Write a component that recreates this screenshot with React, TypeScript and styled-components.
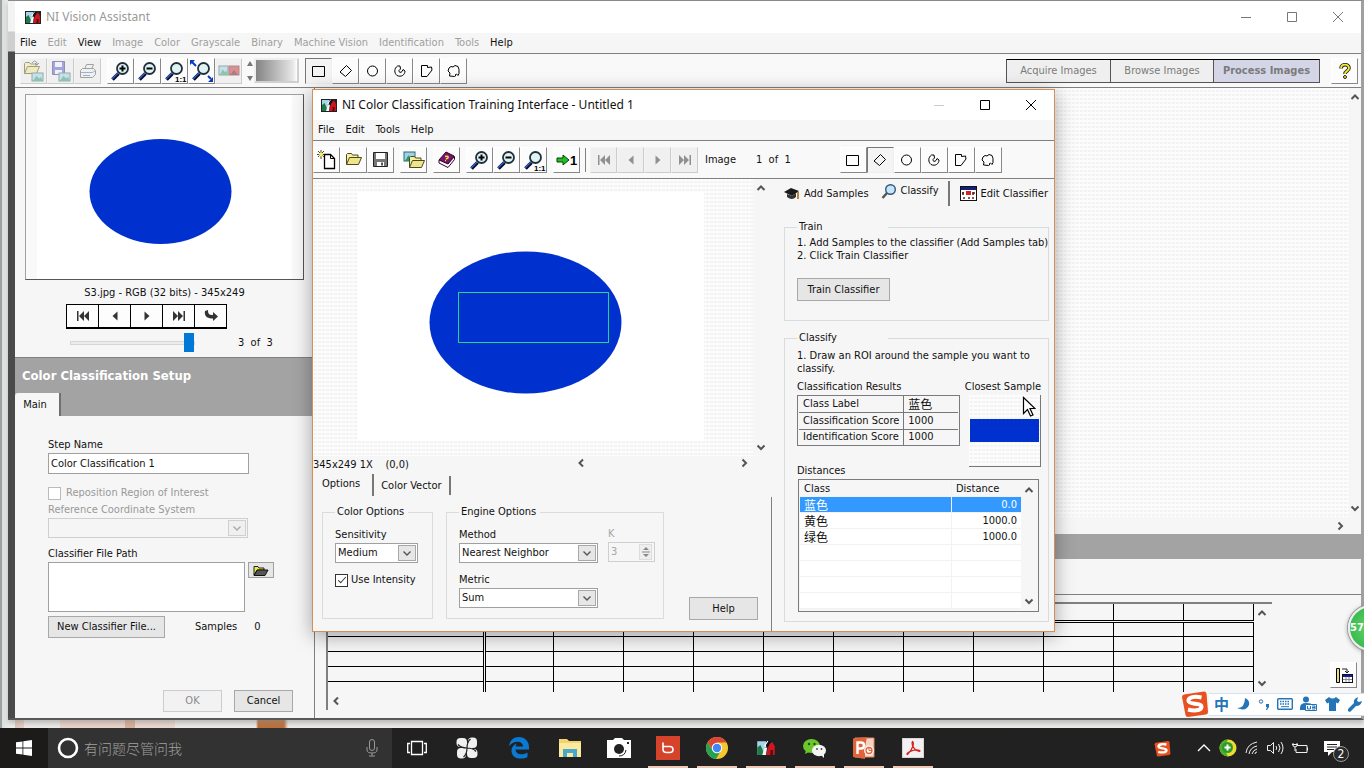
import React from 'react';
import styled, { createGlobalStyle, css } from 'styled-components';

const UI_FONT = `"DejaVu Sans Condensed", "Noto Sans", "Noto Sans CJK SC", sans-serif`;
const TITLE_FONT = `"Noto Sans", "Noto Sans CJK SC", sans-serif`;
const CJK_FONT = `"Noto Sans CJK SC", sans-serif`;

const FACE = '#f6f6f6';
const EDGE = '#808080';
const BAND = '#a3a3a3';
const BLUE = '#0031ce';
const dots = css`
  background-color: #f3f3f3;
  background-image: linear-gradient(90deg, #fcfcfc 1px, transparent 1px),
    linear-gradient(#fcfcfc 2px, transparent 2px);
  background-size: 4px 4px;
`;

const GlobalStyle = createGlobalStyle`
  *, *::before, *::after { box-sizing: border-box; }
  body { margin: 0; font: 11px/16px ${UI_FONT}; color: #111; overflow: hidden; }
  button, input, select, textarea { font: inherit; color: inherit; margin: 0; border-radius: 0; }
  button { padding: 0; border: 0; background: none; }
  svg { display: block; flex: none; }
`;

/* ---------- icons ---------- */

const AppLogo = ({ w = 16 }: { w?: number }) => (
  <svg width={w} height={w * 13 / 16} viewBox="0 0 16 13">
    <rect width="16" height="13" fill="#1c2326" />
    <rect x="1" y="1" width="7" height="11" fill="#a9d4ea" />
    <path d="M1 12V6l2.500-2 1.500 3 2 5z" fill="#1e7a46" />
    <path d="M5 12l1.500-5L9 5l-1 7z" fill="#f4f8f8" />
    <path d="M8 12l1-4 2-5 2-1.500L15 5v7z" fill="#d0161c" />
    <path d="M9 1h3l-3 5-1.500 0z" fill="#111" />
    <path d="M11.500 8h2v4h-2z" fill="#5a0a0e" />
    <path d="M9.500.8 7 4.500 8 5.500" stroke="#fff" strokeWidth=".9" fill="none" />
  </svg>
);

const Lens = ({ kind }: { kind: 'in' | 'out' | 'one' | 'fit' }) => (
  <svg width="26" height="24" viewBox="0 0 26 24">
    <path d="M4.500 20.500 10.500 14.500" stroke="#0a0a28" strokeWidth="3.600" />
    <path d="M4 20 10 14" stroke="#2c62c8" strokeWidth="1.400" />
    <circle cx="14.500" cy="9.500" r="5.500" fill="#dff3f4" stroke="#20303c" strokeWidth="1.800" />
    {(kind === 'in' || kind === 'out') && <path d="M11.500 9.500h6" stroke="#000" strokeWidth="2" />}
    {kind === 'in' && <path d="M14.500 6.500v6" stroke="#000" strokeWidth="2" />}
    {kind === 'one' && (
      <text x="13" y="23" fontSize="8" fontWeight="bold" fontFamily="Liberation Sans, sans-serif">1:1</text>
    )}
    {kind === 'fit' && (
      <g stroke="#0a36c8" fill="#0a36c8">
        <path d="M3 3l4 4M19 17l3 3" strokeWidth="2" />
        <path d="M1 1h5L1 6zM24 23h-5l5-5z" stroke="none" />
      </g>
    )}
  </svg>
);

const Mountain = ({ x, y, w, h }: { x: number; y: number; w: number; h: number }) => (
  <g transform={`translate(${x} ${y})`}>
    <rect width={w} height={h} fill="#9fd0f0" stroke="#2e6c58" />
    <path d={`M1 ${h} L${w * 0.4} ${h * 0.35} L${w * 0.65} ${h * 0.7} L${w * 0.8} ${h * 0.5} L${w} ${h}z`} fill="#2c9a6c" />
  </g>
);

const FolderShape = ({ x = 0, y = 0 }) => (
  <g transform={`translate(${x} ${y})`} stroke="#4a4a20" strokeWidth="1">
    <path d="M1.500 12.500v-10l1-1h4l1 1.500h5.500v3" fill="#f6f0a0" />
    <path d="M1.500 12.500 4.500 5.500h12l-3 7z" fill="#efe48a" />
  </g>
);

const OpenImageIcon = () => (
  <svg width="22" height="22" viewBox="0 0 22 22">
    <FolderShape x={0} y={1} />
    <path d="M9 3c2-3 5-2 5 1m-2-1 2 2 2-2" fill="none" stroke="#444" />
    <Mountain x={9} y={13} w={11} h={8} />
  </svg>
);
const SaveImageIcon = () => (
  <svg width="22" height="22" viewBox="0 0 22 22">
    <path d="M2.500 1.500h12v13h-12z" fill="#5a5ad0" stroke="#303080" />
    <path d="M5 2h7v5H5zM5 10h7v4H5z" fill="#f2f2ff" />
    <Mountain x={9} y={13} w={11} h={8} />
  </svg>
);
const PrintIcon = () => (
  <svg width="22" height="22" viewBox="0 0 22 22" stroke="#555" fill="#eef0f4">
    <path d="M7.500 9.500l2-5h7l-2 5z" />
    <path d="M3.500 10.500l2-2h11l2 2v4l-3 3h-12z" />
    <path d="M3.500 12.500h12l3-2M6 15.500h7" fill="none" stroke="#4a76a8" />
  </svg>
);
const TwoImagesIcon = () => (
  <svg width="22" height="12" viewBox="0 0 22 12">
    <Mountain x={1} y={1} w={9} h={9} />
    <rect x="11" y="1" width="10" height="9" fill="#c43038" stroke="#7a2020" />
    <path d="M12 10l4-5 4 5z" fill="#5c1014" />
  </svg>
);

const ShapeIcon = ({ name }: { name: string }) => (
  <svg width="14" height="14" viewBox="0 0 14 14" fill="none" stroke="#000" strokeWidth="1">
    {name === 'rect' && <path d="M.5 2.500h12v10H.5z" />}
    {name === 'rot' && <path d="M1 8 7.500 1.500l5 5L6.500 12.500z" />}
    {name === 'oval' && <circle cx="6.500" cy="7" r="5" />}
    {name === 'ring' && <path d="M4.500 2C1 4.500 1 9 4 11.500c4 2 8-.5 8-4.500L10 5.500 9 7.500C8 9 5.500 8.500 6 6.500L7.500 5 7 2z" />}
    {name === 'poly' && <path d="M1.500 1.500h6v2l4-.5.5 3-5 6.500H1.500z" />}
    {name === 'free' && <path d="M4 2.500l2 .5 2-1.500 3 1L12 5.500v4l-1 2L9.500 10l-1 .5v1.500l-1 .5-5-.5.5-3-2-2 1-3z" />}
  </svg>
);

const SHAPES = ['rect', 'rot', 'oval', 'ring', 'poly', 'free'];
const SHAPE_LABELS = ['Rectangle', 'Rotated rectangle', 'Oval', 'Annulus', 'Polygon', 'Freehand region'];

const NavGlyph = ({ name, color = '#333' }: { name: string; color?: string }) => (
  <svg width="16" height="12" viewBox="0 0 16 12" fill={color}>
    {name === 'first' && <path d="M2 1h1.500v10H2zM9 1v10L4 6zM14 1v10L9 6z" />}
    {name === 'prev' && <path d="M10.500 1.500v9L5.500 6z" />}
    {name === 'next' && <path d="M5.500 1.500v9L10.500 6z" />}
    {name === 'last' && <path d="M12.500 1H14v10h-1.500zM2 1v10l5-5zM7 1v10l5-5z" />}
    {name === 'return' && <path d="M2 1l3-1c0 4 1 5 5 5V2l5 4.500L10 11V8.500C4 8.500 1 6 2 1z" />}
  </svg>
);

const Chevron = ({ dir = 'down', size = 10, color = '#555', weight = 2 }: { dir?: 'up' | 'down' | 'left' | 'right'; size?: number; color?: string; weight?: number }) => (
  <svg width={size} height={size} viewBox="0 0 10 10" fill="none" stroke={color} strokeWidth={weight}>
    {dir === 'up' && <path d="M1.500 7 5 3.500 8.500 7" />}
    {dir === 'down' && <path d="M1.500 3.500 5 7l3.500-3.500" />}
    {dir === 'left' && <path d="M7 1.500 3.500 5 7 8.500" />}
    {dir === 'right' && <path d="M3.500 1.500 7 5 3.500 8.500" />}
  </svg>
);

/* ---------- shared controls ---------- */

const TitleBar = styled.header<{ $tall?: boolean }>`
  display: flex;
  align-items: center;
  height: ${p => (p.$tall ? 32 : 30)}px;
  padding-left: ${p => (p.$tall ? 10 : 8)}px;
  gap: 5px;
  background: #fff;
  font: 12px/16px ${TITLE_FONT};
  color: ${p => (p.$tall ? '#999' : '#111')};
  flex: none;
`;
const WindowTitle = styled.span`flex: 1; white-space: nowrap;`;
const CaptionGroup = styled.div`display: flex; height: 100%;`;
const Caption = styled.button`
  width: 46px;
  height: 100%;
  display: grid;
  place-items: center;
`;
const CaptionButtons = ({ color, minColor = color }: { color: string; minColor?: string }) => (
  <CaptionGroup>
    <Caption aria-label="Minimize"><svg width="10" height="10"><path d="M0 5.500h10" stroke={minColor} /></svg></Caption>
    <Caption aria-label="Maximize"><svg width="10" height="10"><path d="M.5.5h9v9h-9z" stroke={color} fill="none" /></svg></Caption>
    <Caption aria-label="Close"><svg width="10" height="10"><path d="M0 0l10 10M10 0 0 10" stroke={color} /></svg></Caption>
  </CaptionGroup>
);

const MenuBar = styled.nav`
  display: flex;
  height: 21px;
  align-items: center;
  gap: 11px;
  padding-left: 5px;
  background: ${FACE};
  border-bottom: 1px solid ${EDGE};
  flex: none;
`;
const MenuItem = styled.button`
  white-space: nowrap;
  &:disabled { color: #a0a0a0; }
`;

const Toolbar = styled.div<{ $dialog?: boolean }>`
  display: flex;
  align-items: center;
  height: ${p => (p.$dialog ? 38 : 34)}px;
  padding: 0 3px 0 ${p => (p.$dialog ? 0 : 5)}px;
  gap: 6px;
  background: #f9f9f9;
  border-bottom: 1px solid ${EDGE};
  flex: none;
`;
const ToolGroup = styled.div<{ $push?: number }>`
  display: flex;
  margin-left: ${p => p.$push ?? 0}px;
`;
const Tool = styled.button<{ $down?: boolean }>`
  width: 27px;
  height: 26px;
  display: grid;
  place-items: center;
  background: ${p => (p.$down ? '#f4f4f4' : '#fcfcfc')};
  border: 1px solid;
  border-color: ${p => (p.$down ? '#777 #eee #eee #777' : '#fff #888 #888 #fff')};
  &:disabled { background: #f0f0f0; border-color: #f4f4f4 #ccc #ccc #f4f4f4; }
  &:disabled svg { opacity: .5; }
`;
const Spacer = styled.div`flex: 1;`;

const ShapeTools = ({ active, push }: { active: string; push?: number }) => (
  <ToolGroup $push={push}>
    {SHAPES.map((s, i) => (
      <Tool key={s} $down={s === active} aria-label={SHAPE_LABELS[i]}><ShapeIcon name={s} /></Tool>
    ))}
  </ToolGroup>
);

const PushButton = styled.button<{ $w: number; $h?: number }>`
  width: ${p => p.$w}px;
  height: ${p => p.$h ?? 22}px;
  background: #e6e6e6;
  border: 1px solid #a8a8a8;
  white-space: nowrap;
  &:disabled { color: #8a8a8a; background: #f2f2f2; border-color: #ccc; }
`;

const Field = styled.input`
  height: 21px;
  width: 100%;
  padding: 0 2px;
  background: #fff;
  border: 1px solid #a0a0a0;
  outline: 0;
`;

const SelectBox = styled.div<{ $off?: boolean }>`
  display: grid;
  grid-template-columns: 1fr 18px;
  align-items: center;
  height: 20px;
  padding-right: 1px;
  border: 1px solid ${p => (p.$off ? '#cfcfcf' : '#a0a0a0')};
  background: ${p => (p.$off ? '#f5f5f5' : '#fff')};
  select {
    grid-area: 1 / 1 / 2 / 3;
    appearance: none;
    width: 100%;
    height: 18px;
    border: 0;
    padding: 0 20px 0 2px;
    background: none;
    outline: 0;
    opacity: 1;
  }
`;
const SelectArrow = styled.span<{ $off?: boolean }>`
  grid-area: 1 / 2 / 2 / 3;
  height: 16px;
  display: grid;
  place-items: center;
  border: 1px solid ${p => (p.$off ? '#d0d0d0' : '#a8a8a8')};
  background: ${p => (p.$off ? '#f0f0f0' : '#e6e6e6')};
  pointer-events: none;
`;
const Dropdown = ({ id, value, off }: { id: string; value: string; off?: boolean }) => (
  <SelectBox $off={off}>
    <select id={id} disabled={off} defaultValue={value}><option>{value}</option></select>
    <SelectArrow $off={off}><Chevron size={10} weight={1.4} color={off ? '#aaa' : '#555'} /></SelectArrow>
  </SelectBox>
);

const CheckLabel = styled.label<{ $off?: boolean }>`
  display: flex;
  align-items: center;
  gap: ${p => (p.$off ? 5 : 3)}px;
  height: 16px;
  white-space: nowrap;
  color: ${p => (p.$off ? '#999' : '#111')};
  input {
    appearance: none;
    width: 13px;
    height: 13px;
    border: 1px solid ${p => (p.$off ? '#bbb' : '#333')};
    background: #fff;
    display: grid;
    place-items: center;
  }
  input:checked::after {
    content: '';
    width: 4px;
    height: 8px;
    margin-bottom: 2px;
    border: solid #333;
    border-width: 0 1px 1px 0;
    rotate: 42deg;
  }
`;

const Group = styled.fieldset<{ $w?: number; $h: number; $legendW?: number }>`
  width: ${p => (p.$w ? p.$w + 'px' : 'auto')};
  height: ${p => p.$h}px;
  min-width: 0;
  margin: 0;
  padding: 0 8px 0 12px;
  border: 1px solid #d9dcdc;
  legend {
    height: 16px;
    padding: 0 4px 0 2px;
    width: ${p => (p.$legendW ? p.$legendW + 'px' : 'auto')};
    white-space: nowrap;
  }
`;

const ScrollColumn = styled.div<{ $w?: number }>`
  display: flex;
  flex-direction: column;
  justify-content: space-between;
  align-items: center;
  width: ${p => p.$w ?? 16}px;
  padding: 4px 0;
  background: ${FACE};
`;

/* ---------- desktop and main window ---------- */

const Desktop = styled.div`
  position: relative;
  height: 100vh;
  display: flex;
  flex-direction: column;
  background: linear-gradient(90deg, #9da39f 2px, #dcdfe0 2px, #eceeee 8px, #efefef 15px, #e4c4b8 15px, #e8cfc6 24px,
    #ecebe8 24px, #ecebe8 60px, #ecd4ca 60px, #ecd4ca 125px, #dcae98 125px, #dcae98 135px, #ecd8d0 135px, #ecd8d0 175px,
    #ecebe8 175px, #ecebe8 256px, #bd7038 258px, #bd7038 284px, #ecebe8 288px, #ececec 100%);
`;
const MainWindow = styled.main`
  flex: 1;
  min-height: 0;
  display: flex;
  flex-direction: column;
  margin: 0 0 8px 8px;
  padding-left: 7px;
  border-top: 1px solid #8a8a8a;
  border-right: 3px solid #a29fa1;
  border-bottom: 2px solid #585858;
  background: linear-gradient(#f3f3f3 30px, #cfcfcf 31px, #cfcfcf 50px, #4a4a4a 51px);
  box-shadow: 0 3px 5px #8888;
`;
const Gradient = styled.div`
  width: 45px;
  height: 25px;
  border: 2px solid #eee;
  border-right-color: #d0d0d0;
  border-bottom-color: #d0d0d0;
  background: linear-gradient(90deg, #848484, #e6e6e6 90%, #fff);
`;
const SpinPair = styled.div`
  display: flex;
  flex-direction: column;
  justify-content: space-between;
  align-items: center;
  height: 24px;
  width: 6px;
  margin: 0 -5px 0 -1px;
`;
const ModeTabs = styled.div`
  display: flex;
  height: 24px;
  border: 1px solid #555;
  border-top-color: #000;
  margin-right: 5px;
`;
const ModeTab = styled.button<{ $on?: boolean }>`
  padding: 0 8px;
  min-width: ${p => (p.$on ? 106 : 103)}px;
  color: #7b7b7b;
  background: ${p => (p.$on ? '#d5d5e8' : '#efefef')};
  font-weight: ${p => (p.$on ? 'bold' : 'normal')};
  & + & { border-left: 1px solid #555; }
`;

const Work = styled.div`
  flex: 1;
  min-height: 0;
  display: flex;
  background: ${FACE};
`;
const SidePanel = styled.aside`
  width: 300px;
  flex: none;
  display: flex;
  flex-direction: column;
  border-right: 1px solid ${EDGE};
`;
const Preview = styled.section`
  display: flex;
  flex-direction: column;
  align-items: center;
  height: 270px;
  padding: 6px 10px 0;
  border-bottom: 1px solid ${EDGE};
`;
const Thumb = styled.div`
  align-self: stretch;
  height: 186px;
  padding: 0 11px;
  border: 1px solid;
  border-color: #a0a0a0 #555 #555 #a0a0a0;
  background: #f9f9f9;
`;
const ThumbCaption = styled.p`margin: 5px 0 3px; line-height: 16px; white-space: pre;`;
const NavButtons = styled.div`
  display: flex;
  width: 161px;
  margin-right: 36px;
  border: 1px solid #000;
  border-bottom-width: 2px;
  button {
    flex: 1;
    height: 22px;
    display: grid;
    place-items: center;
    background: #fdfdfd;
  }
  button + button { border-left: 1px solid #000; }
`;
const SlideRow = styled.div`
  display: flex;
  align-self: stretch;
  align-items: center;
  gap: 43px;
  padding: 4px 0 0 45px;
  white-space: pre;
`;
const Slider = styled.input`
  appearance: none;
  width: 125px;
  height: 20px;
  background: none;
  &::-webkit-slider-runnable-track {
    height: 4px;
    border: 1px solid #d6d6d6;
    background: #ececec;
  }
  &::-webkit-slider-thumb {
    appearance: none;
    width: 10px;
    height: 19px;
    margin-top: -9px;
    background: #0078d7;
  }
`;

const SetupHeader = styled.div`
  height: 58px;
  flex: none;
  display: flex;
  flex-direction: column;
  justify-content: space-between;
  background: ${BAND};
  h2 { margin: 0; padding: 10px 7px 0; font: bold 13px/16px ${UI_FONT}; color: #fff; }
`;
const SetupTab = styled.button`
  width: 46px;
  height: 23px;
  padding-right: 4px;
  background: ${FACE};
  border-right: 2px solid #707070;
  border-top-left-radius: 3px;
`;
const SetupForm = styled.form`
  flex: 1;
  display: flex;
  flex-direction: column;
  padding: 20px 21px 6px 33px;
`;
const FormBlock = styled.div<{ $w: number; $gap?: number; $off?: boolean }>`
  width: ${p => p.$w}px;
  margin-bottom: ${p => p.$gap ?? 8}px;
  color: ${p => (p.$off ? '#999' : '#111')};
  label { display: block; height: 17px; line-height: 17px; white-space: nowrap; }
`;
const PathRow = styled.div`
  display: flex;
  align-items: flex-start;
  gap: 3px;
  margin-bottom: 4px;
`;
const PathBox = styled.textarea`
  width: 197px;
  height: 50px;
  resize: none;
  border: 1px solid #a0a0a0;
  outline: 0;
`;
const FolderButton = styled.button`
  width: 26px;
  height: 16px;
  display: grid;
  place-items: center;
  background: #e6e6e6;
  border: 1px solid #a0a0a0;
`;
const SampleRow = styled.div`
  display: flex;
  align-items: center;
  gap: 30px;
  output { margin-left: -13px; }
`;
const FormActions = styled.div`
  display: flex;
  justify-content: flex-end;
  gap: 12px;
  margin-top: auto;
`;

const Stage = styled.section`
  flex: 1;
  min-width: 0;
  display: flex;
  flex-direction: column;
`;
const CanvasRow = styled.div`flex: 1; display: flex;`;
const Canvas = styled.div`flex: 1; ${dots}`;
const HScroll = styled.div`
  height: 17px;
  display: flex;
  justify-content: flex-end;
  align-items: center;
  padding-right: 16px;
`;
const Band = styled.div`height: 25px; background: ${BAND};`;
const ScriptStrip = styled.div`height: 36px; border-bottom: 1px solid ${EDGE};`;
const ResultArea = styled.div`
  height: 123px;
  display: flex;
  justify-content: space-between;
  padding: 7px 4px 0 11px;
`;
const ResultBox = styled.div`
  width: 946px;
  height: 108px;
  border-top: 2px solid ${EDGE};
  border-left: 2px solid ${EDGE};
`;
const ResultTop = styled.div`display: flex; height: 88px; overflow: hidden;`;
const ResultScroll = styled.div`padding: 4px 3px;`;
const ResultTable = styled.table`
  width: 926px;
  height: 92px;
  flex: none;
  table-layout: fixed;
  border-collapse: collapse;
  td, th { height: 15px; padding: 0; border: 1px solid #000; border-left: 0; }
  th { border-top: 0; height: 17px; border-bottom: 3px double #000; }
  td:first-child, th:first-child { width: 156px; border-right: 3px double #000; }
`;
const ToolsColumn = styled.div`
  display: flex;
  flex-direction: column;
  padding-top: 60px;
`;

/* ---------- training dialog ---------- */

const Dialog = styled.div`
  position: absolute;
  left: 312px;
  top: 89px;
  width: 743px;
  display: flex;
  flex-direction: column;
  border: 1px solid #d58f56;
  background: ${FACE};
  box-shadow: 0 4px 18px rgba(0, 0, 0, .35);
`;
const Divider = styled.i`width: 1px; height: 24px; margin: 0 -2px 0 -1px; background: ${EDGE};`;
const ImageCount = styled.span`
  display: flex;
  gap: 20px;
  margin-left: 1px;
  white-space: pre;
`;
const DialogBody = styled.div`display: flex; height: 452px;`;
const DialogLeft = styled.div`
  width: 459px;
  flex: none;
  display: flex;
  flex-direction: column;
`;
const ImageRow = styled.div`display: flex; height: 277px;`;
const ImageCanvas = styled.div`
  flex: 1;
  padding: 13px 0 0 45px;
  ${dots}
`;
const ImageScroll = styled(ScrollColumn)`margin-right: 3px;`;
const StatusRow = styled.div`
  display: flex;
  align-items: center;
  height: 17px;
  white-space: pre;
`;
const StatusScroll = styled.div`
  display: flex;
  justify-content: space-between;
  width: 173px;
  margin: 0 23px 3px auto;
`;
const TabRow = styled.div`
  display: flex;
  align-items: center;
  height: 24px;
`;
const PlainTab = styled.button<{ $h: number; $edge?: boolean; $pad: string }>`
  height: ${p => p.$h}px;
  display: flex;
  align-items: center;
  gap: 4px;
  padding: ${p => p.$pad};
  white-space: nowrap;
  border-right: ${p => (p.$edge ? '2px solid #777' : '0')};
`;
const OptionsRow = styled.div`
  flex: 1;
  display: flex;
  align-items: flex-start;
  padding: 7px 13px 0 9px;
  border-right: 1px solid ${EDGE};
  gap: 13px;
`;
const Column = styled.div<{ $w?: number; $top?: number; $gap?: number }>`
  display: flex;
  flex: none;
  flex-direction: column;
  width: ${p => (p.$w ? p.$w + 'px' : 'auto')};
  padding-top: ${p => p.$top ?? 7}px;
  gap: ${p => p.$gap ?? 8}px;
`;
const Stack = styled.div<{ $off?: boolean }>`
  color: ${p => (p.$off ? '#a6a6a6' : '#111')};
  label { display: block; height: 16px; }
`;
const EngineGrid = styled.div`display: flex; gap: 10px;`;
const Spinner = styled.div`
  display: flex;
  align-items: center;
  justify-content: space-between;
  width: 47px;
  height: 20px;
  padding-right: 2px;
  border: 1px solid #cfcfcf;
  input { width: 26px; border: 0; padding: 0 2px; background: none; }
`;
const SpinButtons = styled.span`
  display: grid;
  place-items: center;
  width: 13px;
  height: 16px;
  background: #eee;
  border: 1px solid #ddd;
`;
const HelpSlot = styled.div`margin: 93px 0 0 auto;`;

const DialogRight = styled.div`
  flex: 1;
  min-width: 0;
  padding: 2px 5px 9px 12px;
  display: flex;
  flex-direction: column;
`;
const TopTabs = styled.div`
  display: flex;
  align-items: center;
  height: 25px;
  margin: 0 -4px 13px 0;
`;
const Steps = styled.p<{ $top?: number; $bottom: number }>`
  margin: ${p => p.$top ?? 0}px 0 ${p => p.$bottom}px;
  line-height: 13px;
  white-space: nowrap;
`;
const ResultsRow = styled.div`
  display: flex;
  justify-content: space-between;
  align-items: flex-start;
  height: 84px;
  margin-right: -1px;
`;
const ScoreTable = styled.table`
  width: 163px;
  height: 51px;
  border: 1px solid #7a7a80;
  border-spacing: 0;
  padding: 0 1px 0 1px;
  th, td { height: 16px; padding: 0 4px; font-weight: normal; text-align: left; line-height: 14px; white-space: nowrap; }
  th { width: 104px; border-right: 1px solid #777; }
  tr + tr th, tr + tr td { border-top: 1px solid #777; }
`;
const Cjk = styled.span`display: block; font: 12px/14px ${CJK_FONT};`;
const FieldCaption = styled.div`height: 16px; white-space: nowrap;`;
const SampleBox = styled.div`
  width: 72px;
  height: 72px;
  margin-left: auto;
  padding: 24px 1px;
  border-right: 1px solid #777;
  border-bottom: 1px solid #777;
  ${dots}
  &::before { content: ''; display: block; height: 23px; background: ${BLUE}; }
`;
const DistanceBox = styled.div`
  display: flex;
  width: 241px;
  height: 133px;
  padding: 1px;
  margin-left: 1px;
  border: 1px solid #7a7a80;
`;
const DistanceTable = styled.table`
  flex: 1;
  align-self: flex-start;
  table-layout: fixed;
  border-spacing: 0;
  th, td { height: 16px; padding: 0 4px; line-height: 14px; text-align: left; font-weight: normal; border-bottom: 1px solid #f2f2f2; background: #fff; }
  th { background: ${FACE}; }
  th:first-child, td:first-child { width: 152px; border-right: 1px solid #f2f2f2; }
  td + td { text-align: right; }
`;
const DistanceRow = styled.tr<{ $on?: boolean }>`
  && td {
    ${p => p.$on && css`background: #3399ff; color: #fff;`}
  }
`;
const Pointer = styled.svg`
  position: absolute;
  left: 1022px;
  top: 396px;
`;

/* ---------- floating tools and taskbar ---------- */

const Bubble = styled.div`
  position: absolute;
  right: -30px;
  top: 605px;
  width: 46px;
  height: 46px;
  border-radius: 50%;
  border: 2px solid #eee;
  background: radial-gradient(#5fd86c, #2fae44);
  box-shadow: 0 0 0 1px #999, 0 1px 5px #888;
  color: #fff;
  font: bold 11px/42px ${UI_FONT};
`;
const InputBar = styled.div`
  position: absolute;
  right: 0;
  top: 690px;
  height: 28px;
  display: flex;
  align-items: center;
`;
const InputItems = styled.div`
  display: flex;
  align-items: center;
  justify-content: space-between;
  width: 155px;
  height: 23px;
  padding: 0 2px 0 5px;
  background: #fff;
  border: solid #d5e2ee;
  border-width: 1px 0;
  color: #2474b8;
  font: bold 15px/20px ${CJK_FONT};
`;

const Taskbar = styled.footer`
  height: 40px;
  flex: none;
  display: flex;
  align-items: stretch;
  background: #212121;
  color: #fff;
`;
const TaskButton = styled.button<{ $w?: number; $on?: boolean; $dark?: boolean }>`
  width: ${p => p.$w ?? 49}px;
  display: grid;
  place-items: center;
  background: ${p => (p.$dark ? '#1d1b1a' : 'none')};
  ${p => p.$on && css`background: linear-gradient(#f0c9b4, #f0c9b4) center bottom / 40px 2px no-repeat;`}
`;
const Search = styled.label`
  display: flex;
  align-items: center;
  gap: 3px;
  width: 344px;
  padding: 0 12px 0 9px;
  background: #323232;
  input {
    flex: 1;
    min-width: 0;
    border: 0;
    outline: 0;
    background: none;
    font: 14px/20px ${CJK_FONT};
    font-weight: 300;
  }
  input::placeholder { color: #a0a0a0; }
`;
const Tray = styled.div`
  margin-left: auto;
  display: flex;
  align-items: center;
  gap: 8px;
  padding-right: 15px;
`;
const Notice = styled.button`position: relative; width: 26px; height: 28px; margin-left: 6px;`;
const NoticeCount = styled.span`
  position: absolute;
  right: 0;
  bottom: 0;
  width: 16px;
  height: 16px;
  border-radius: 50%;
  border: 1px solid #999;
  background: #2a2a2a;
  color: #fff;
  font: 12px/14px ${UI_FONT};
`;

const Sogou = ({ size }: { size: number }) => (
  <svg width={size} height={size} viewBox="0 0 28 28">
    <path d="M3 4.500 23 1.500q2 0 2.500 2L27 22q0 2-2 2.500L7 27q-2 0-2.500-2L1 7q0-2 2-2.500z" fill="#e8501f" />
    <path d="M20.500 7.500C12 5.500 7 8 7.500 11c.5 4 13.500 1.500 13 6-.5 4-8 4-13.500 2.500" fill="none" stroke="#fff" strokeWidth="4" />
  </svg>
);

const taskApps: { name: string; w?: number; on?: boolean; art: React.ReactNode }[] = [
  { name: 'Task View', art: (
    <svg width="20" height="16" viewBox="0 0 20 16" fill="none" stroke="#fff" strokeWidth="1.300"><path d="M4.500 1.500h11v13h-11zM3 3.500H.7v9H3M17 3.500h2.300v9H17" /></svg>
  ) },
  { name: 'Pinwheel', w: 51, art: (
    <svg width="22" height="22" viewBox="0 0 22 22">
      <g fill="#f0f0f0">
        <rect x=".5" y="1" width="10.500" height="9" rx="4" />
        <rect x="12" y=".5" width="9" height="10.500" rx="4" />
        <rect x="11" y="12" width="10.500" height="9" rx="4" />
        <rect x="1" y="11" width="9" height="10.500" rx="4" />
        <rect x="6" y="6" width="10" height="10" />
      </g>
      <path d="M11 11Q11 5 14.500 2M11 11q6 0 9 3.500M11 11q0 6-3.500 9M11 11Q5 11 2 7.500" fill="none" stroke="#222" strokeWidth="1.200" />
    </svg>
  ) },
  { name: 'Edge', w: 54, art: (
    <svg width="20" height="22" viewBox="0 0 20 22"><path d="M0 9C1 3 5 0 10 0c6 0 10 4.500 10 10v2.500H6.500C7 18 14 18.500 18.500 15.500V20C14 22.500 3 23 2.500 14 2.500 10 5 7.500 8 6.500c-1 1-1.500 2-1.500 3H14C14 3.500 5 3 0 9z" fill="#0a79d4" /></svg>
  ) },
  { name: 'File Explorer', w: 48, art: (
    <svg width="22" height="20" viewBox="0 0 22 20"><path d="M0 1h8l2 2h12v16H0z" fill="#f3d46c" /><path d="M0 5h22v14H0z" fill="#fbe9a0" /><path d="M4 19v-8h14v8h-4v-4H8v4z" fill="#46a8cc" /></svg>
  ) },
  { name: 'Camera', art: (
    <svg width="24" height="20" viewBox="0 0 24 20"><path d="M0 2h6l2-2h7l2 2h7v18H0z" fill="#fff" /><circle cx="12" cy="11" r="5" fill="#222" /><path d="M12 18q6 0 7-6" stroke="#222" fill="none" /><rect x="20" y="4" width="2" height="2" fill="#222" /></svg>
  ) },
  { name: 'Bandicam', on: true, art: (
    <svg width="24" height="24" viewBox="0 0 24 24"><rect width="24" height="24" fill="#d5432a" /><path d="M7 6.500v6.500q0 3.500 3.500 3.500h3.500q3 0 3-3t-3-3H7" stroke="#fff" strokeWidth="1.600" fill="none" /></svg>
  ) },
  { name: 'Chrome', on: true, art: (
    <svg width="22" height="22" viewBox="0 0 22 22"><circle cx="11" cy="11" r="11" fill="#f6c72f" /><path d="M1.500 5.500A11 11 0 0 1 20.500 5.500H11L7 13z" fill="#dc4437" /><path d="M1.500 5.500A11 11 0 0 0 10 22l5-8.500H7z" fill="#27a052" /><circle cx="11" cy="11" r="5.200" fill="#fff" /><circle cx="11" cy="11" r="4.200" fill="#4285f4" /></svg>
  ) },
  { name: 'NI Vision Assistant', on: true, art: <AppLogo w={20} /> },
  { name: 'WeChat', on: true, art: (
    <svg width="23" height="20" viewBox="0 0 23 20"><ellipse cx="8.500" cy="8" rx="8.500" ry="7" fill="#6cc72c" /><path d="M3 12l-1 4 4-2z" fill="#6cc72c" /><circle cx="6" cy="6" r="1.200" fill="#245010" /><circle cx="11.500" cy="6" r="1.200" fill="#245010" /><ellipse cx="16" cy="12.500" rx="7" ry="5.800" fill="#f4f4f4" /><path d="M18 17l3 3v-4z" fill="#f4f4f4" /><circle cx="14" cy="11" r=".9" fill="#444" /><circle cx="18.500" cy="11" r=".9" fill="#444" /></svg>
  ) },
  { name: 'PowerPoint', on: true, art: (
    <svg width="22" height="22" viewBox="0 0 22 22"><path d="M2 1h19v19H2z" fill="#f6d2c2" stroke="#e8825c" /><path d="M0 1.500l14-1.500-2 10v12L0 20z" fill="#e0643a" /><path d="M4.500 17V5.500H8q3 0 3 3t-3 3H5" stroke="#fff" strokeWidth="2.400" fill="none" /><circle cx="16" cy="13.500" r="5" fill="#fff4ee" /><circle cx="16" cy="13.500" r="3" fill="none" stroke="#e06a40" strokeWidth="1.300" /><path d="M16 10.500v3h3" stroke="#e06a40" fill="none" /></svg>
  ) },
  { name: 'Adobe Reader', on: true, art: (
    <svg width="22" height="20" viewBox="0 0 22 20"><rect width="22" height="20" fill="#f2f0f0" stroke="#bbb" /><path d="M10.500 3.500q1.500 1 .5 4.500-2 5.500-5.500 8.500-1.500-.5 1.500-2.500 5-2.500 9-2 3 .5 1.500 1.500-5-1-7-6-1-3 0-4z" fill="none" stroke="#d02020" strokeWidth="1.200" /></svg>
  ) },
];

const menus: [string, boolean][] = [
  ['File', true], ['Edit', false], ['View', true], ['Image', false], ['Color', false], ['Grayscale', false],
  ['Binary', false], ['Machine Vision', false], ['Identification', false], ['Tools', false], ['Help', true],
];
const distances: [string, string][] = [['蓝色', '0.0'], ['黄色', '1000.0'], ['绿色', '1000.0'], ['', ''], ['', ''], ['', ''], ['', '']];

const TrainingDialog = () => (
  <Dialog role="dialog" aria-label="NI Color Classification Training Interface">
    <TitleBar>
      <AppLogo />
      <WindowTitle>NI Color Classification Training Interface - Untitled 1</WindowTitle>
      <CaptionButtons color="#000" minColor="#ccc" />
    </TitleBar>
    <MenuBar>
      {['File', 'Edit', 'Tools', 'Help'].map(m => <MenuItem key={m}>{m}</MenuItem>)}
    </MenuBar>
    <Toolbar $dialog>
      <ToolGroup>
        <Tool aria-label="New">
          <svg width="20" height="20" viewBox="0 0 20 20"><path d="M7.500 4.500h6l4 4v10h-10z" fill="#fff" stroke="#000" strokeWidth="1.300" /><path d="M13.500 4.500v4h4" fill="none" stroke="#000" /><path d="M4 0v9M0 4.500h8M1 1l6 6M7 1 1 7" stroke="#111" strokeWidth=".8" /><circle cx="4" cy="4.500" r="2" fill="#f4f044" /></svg>
        </Tool>
        <Tool aria-label="Open"><svg width="18" height="15" viewBox="0 0 18 15"><FolderShape /></svg></Tool>
        <Tool aria-label="Save">
          <svg width="15" height="15" viewBox="0 0 15 15"><path d="M.5.5h14v14H.5z" fill="#777" stroke="#222" /><path d="M3 1h9v6H3zM4 10h7v4H4z" fill="#fff" /><path d="M8 10.500h2v3H8z" fill="#555" /></svg>
        </Tool>
      </ToolGroup>
      <ToolGroup>
        <Tool aria-label="Open image">
          <svg width="22" height="18" viewBox="0 0 22 18"><Mountain x={1} y={1} w={11} h={9} /><g transform="translate(5 4)"><FolderShape /></g></svg>
        </Tool>
      </ToolGroup>
      <ToolGroup>
        <Tool aria-label="Help contents">
          <svg width="18" height="17" viewBox="0 0 18 17"><path d="M1 9 8 1l8 4-6 8z" fill="#7a1470" stroke="#2c0428" /><path d="M1 9v3l9 4.500 6.500-8V5.500L10 13z" fill="#fff" stroke="#2c0428" /><path d="M7 5.500q4-1 3 1.500l-2 1M7 9.500h1" stroke="#f4e03c" strokeWidth="1.500" fill="none" /></svg>
        </Tool>
      </ToolGroup>
      <ToolGroup>
        <Tool aria-label="Zoom in"><Lens kind="in" /></Tool>
        <Tool aria-label="Zoom out"><Lens kind="out" /></Tool>
        <Tool aria-label="Zoom 1:1"><Lens kind="one" /></Tool>
      </ToolGroup>
      <ToolGroup>
        <Tool aria-label="Go to first">
          <svg width="22" height="14" viewBox="0 0 22 14"><path d="M1 5h6V2l6 5-6 5V9H1z" fill="#20c020" stroke="#064006" /><text x="14" y="12" fontSize="13" fontWeight="bold" fontFamily="Liberation Sans, sans-serif">1</text></svg>
        </Tool>
      </ToolGroup>
      <Divider />
      <ToolGroup>
        {['first', 'prev', 'next', 'last'].map(n => <Tool key={n} disabled aria-label={n}><NavGlyph name={n} /></Tool>)}
      </ToolGroup>
      <ImageCount><span>Image</span><span>{'1  of  1'}</span></ImageCount>
      <ShapeTools active="rot" push={43} />
    </Toolbar>
    <DialogBody>
      <DialogLeft>
        <ImageRow>
          <ImageCanvas>
            <svg width="346" height="249" viewBox="0 0 346 249">
              <rect width="346" height="249" fill="#fff" />
              <ellipse cx="167.500" cy="130.500" rx="96" ry="71" fill={BLUE} />
              <rect x="100.500" y="100.500" width="150" height="50" fill="none" stroke="#25d38a" />
            </svg>
          </ImageCanvas>
          <ImageScroll><Chevron dir="up" /><Chevron dir="down" /></ImageScroll>
        </ImageRow>
        <StatusRow>
          {'345x249 1X    (0,0)'}
          <StatusScroll><Chevron dir="left" /><Chevron dir="right" /></StatusScroll>
        </StatusRow>
        <TabRow>
          <PlainTab $h={22} $edge $pad="0 12px 2px 9px">Options</PlainTab>
          <PlainTab $h={19} $edge $pad="2px 7px 0 7px">Color Vector</PlainTab>
        </TabRow>
        <OptionsRow>
          <Group $w={111} $h={115}>
            <legend>Color Options</legend>
            <Column $w={83} $gap={9}>
              <Stack><label htmlFor="sens">Sensitivity</label><Dropdown id="sens" value="Medium" /></Stack>
              <CheckLabel><input type="checkbox" defaultChecked />Use Intensity</CheckLabel>
            </Column>
          </Group>
          <Group $w={218} $h={115}>
            <legend>Engine Options</legend>
            <EngineGrid>
              <Column $w={139} $gap={9}>
                <Stack><label htmlFor="method">Method</label><Dropdown id="method" value="Nearest Neighbor" /></Stack>
                <Stack><label htmlFor="metric">Metric</label><Dropdown id="metric" value="Sum" /></Stack>
              </Column>
              <Column $top={6}>
                <Stack $off>
                  <label htmlFor="k">K</label>
                  <Spinner>
                    <input id="k" defaultValue="3" disabled />
                    <SpinButtons><svg width="8" height="12" fill="#888"><path d="M4 1l3 3H1zM4 11l3-3H1zM0 5.500h8v1H0z" /></svg></SpinButtons>
                  </Spinner>
                </Stack>
              </Column>
            </EngineGrid>
          </Group>
          <HelpSlot><PushButton $w={69} $h={23}>Help</PushButton></HelpSlot>
        </OptionsRow>
      </DialogLeft>
      <DialogRight>
        <TopTabs>
          <PlainTab $h={22} $pad="0">
            <svg width="16" height="12" viewBox="0 0 16 12"><path d="M0 4 7 0l8 3-7 5z" fill="#1a1a1a" /><path d="M3 6v3q5 4 9 0V5L8 8z" fill="#333" /><path d="M14 4v7" stroke="#b8864a" strokeWidth="2" /></svg>
            Add Samples
          </PlainTab>
          <PlainTab $h={25} $edge $pad="0 9px 5px 12px">
            <svg width="16" height="15" viewBox="0 0 16 15"><path d="M1.500 14 6 9" stroke="#555" strokeWidth="2.500" /><circle cx="9.500" cy="5.500" r="4.800" fill="#c2e8f8" stroke="#37547c" strokeWidth="1.400" /></svg>
            Classify
          </PlainTab>
          <PlainTab $h={22} $pad="0 0 0 10px">
            <svg width="17" height="15" viewBox="0 0 17 15"><rect x=".5" y=".5" width="16" height="14" fill="#fff" stroke="#111" /><path d="M1 1h15v3H1z" fill="#10207c" /><path d="M6 5h5v4H6z" fill="#d02428" /><path d="M2 7h2M3 6v3M13 7h2M13 6v3M3 12h2M8 12h2M12 12h2" stroke="#522" strokeWidth="1.600" /></svg>
            Edit Classifier
          </PlainTab>
        </TopTabs>
        <Group $h={102} $legendW={91}>
          <legend>Train</legend>
          <Steps $top={1} $bottom={16}>1. Add Samples to the classifier (Add Samples tab)<br />2. Click Train Classifier</Steps>
          <PushButton $w={93} $h={23}>Train Classifier</PushButton>
        </Group>
        <Spacer />
        <Group $h={292} $legendW={91}>
          <legend>Classify</legend>
          <Steps $top={3} $bottom={4}>1. Draw an ROI around the sample you want to<br />classify.</Steps>
          <ResultsRow>
            <div>
              <FieldCaption>Classification Results</FieldCaption>
              <ScoreTable>
                <tbody>
                  <tr><th>Class Label</th><td><Cjk>蓝色</Cjk></td></tr>
                  <tr><th>Classification Score</th><td>1000</td></tr>
                  <tr><th>Identification Score</th><td>1000</td></tr>
                </tbody>
              </ScoreTable>
            </div>
            <div>
              <FieldCaption>Closest Sample</FieldCaption>
              <SampleBox />
            </div>
          </ResultsRow>
          <FieldCaption>Distances</FieldCaption>
          <DistanceBox>
            <DistanceTable>
              <thead><tr><th>Class</th><th>Distance</th></tr></thead>
              <tbody>
                {distances.map(([name, d], i) => (
                  <DistanceRow key={i} $on={i === 0}><td><Cjk>{name}</Cjk></td><td>{d}</td></DistanceRow>
                ))}
              </tbody>
            </DistanceTable>
            <ScrollColumn><Chevron dir="up" /><Chevron dir="down" /></ScrollColumn>
          </DistanceBox>
        </Group>
      </DialogRight>
    </DialogBody>
  </Dialog>
);

export default function App() {
  return (
    <Desktop>
      <GlobalStyle />
      <MainWindow>
        <TitleBar $tall>
          <AppLogo />
          <WindowTitle>NI Vision Assistant</WindowTitle>
          <CaptionButtons color="#777" />
        </TitleBar>
        <MenuBar>
          {menus.map(([m, on]) => <MenuItem key={m} disabled={!on}>{m}</MenuItem>)}
        </MenuBar>
        <Toolbar>
          <ToolGroup>
            <Tool disabled aria-label="Open image"><OpenImageIcon /></Tool>
            <Tool disabled aria-label="Save image"><SaveImageIcon /></Tool>
            <Tool disabled aria-label="Print"><PrintIcon /></Tool>
          </ToolGroup>
          <ToolGroup>
            <Tool aria-label="Zoom in"><Lens kind="in" /></Tool>
            <Tool aria-label="Zoom out"><Lens kind="out" /></Tool>
            <Tool aria-label="Zoom 1:1"><Lens kind="one" /></Tool>
            <Tool aria-label="Zoom to fit"><Lens kind="fit" /></Tool>
            <Tool disabled aria-label="Compare images"><TwoImagesIcon /></Tool>
          </ToolGroup>
          <SpinPair>
            <svg width="6" height="8"><path d="M3 2l3 5H0z" fill="#777" /></svg>
            <svg width="6" height="8"><path d="M3 6l3-5H0z" fill="#777" /></svg>
          </SpinPair>
          <Gradient />
          <ShapeTools active="rect" />
          <Spacer />
          <ModeTabs>
            <ModeTab>Acquire Images</ModeTab>
            <ModeTab>Browse Images</ModeTab>
            <ModeTab $on>Process Images</ModeTab>
          </ModeTabs>
          <Tool aria-label="Help">
            <svg width="12" height="16" viewBox="0 0 12 16"><path d="M2 5.500C2 .5 10 .5 10 5c0 3-4 3-4 6" fill="none" stroke="#222" strokeWidth="3.600" /><path d="M2 5.500C2 .5 10 .5 10 5c0 3-4 3-4 6" fill="none" stroke="#f4ec30" strokeWidth="1.800" /><circle cx="6" cy="14" r="1.500" fill="#f4ec30" stroke="#222" /></svg>
          </Tool>
        </Toolbar>
        <Work>
          <SidePanel>
            <Preview>
              <Thumb>
                <svg width="255" height="184" viewBox="0 0 255 184"><rect width="255" height="184" fill="#fff" /><ellipse cx="123.500" cy="96.500" rx="71" ry="52.500" fill={BLUE} /></svg>
              </Thumb>
              <ThumbCaption>S3.jpg - RGB (32 bits) - 345x249</ThumbCaption>
              <NavButtons>
                {['first', 'prev', 'next', 'last', 'return'].map(n => <button key={n} aria-label={n}><NavGlyph name={n} /></button>)}
              </NavButtons>
              <SlideRow>
                <Slider type="range" min={1} max={3} defaultValue={3} aria-label="Image number" />
                <span>{'3  of  3'}</span>
              </SlideRow>
            </Preview>
            <SetupHeader>
              <h2>Color Classification Setup</h2>
              <SetupTab>Main</SetupTab>
            </SetupHeader>
            <SetupForm>
              <FormBlock $w={201} $gap={11}>
                <label htmlFor="step">Step Name</label>
                <Field id="step" defaultValue="Color Classification 1" />
              </FormBlock>
              <CheckLabel $off><input type="checkbox" disabled />Reposition Region of Interest</CheckLabel>
              <FormBlock $w={200} $off>
                <label htmlFor="coord">Reference Coordinate System</label>
                <Dropdown id="coord" value="" off />
              </FormBlock>
              <label htmlFor="path">Classifier File Path</label>
              <PathRow>
                <PathBox id="path" />
                <FolderButton type="button" aria-label="Browse for classifier file">
                  <svg width="16" height="11" viewBox="0 0 16 11"><path d="M1 10V1.500h4l1 1.500h5v2H4z" fill="#e6ec40" stroke="#222" /><path d="M1 10.500 4.500 5H15l-3 5.500z" fill="#555" stroke="#111" /></svg>
                </FolderButton>
              </PathRow>
              <SampleRow>
                <PushButton $w={117} type="button">New Classifier File...</PushButton>
                <label htmlFor="count">Samples</label>
                <output id="count">0</output>
              </SampleRow>
              <FormActions>
                <PushButton $w={59} type="button" disabled>OK</PushButton>
                <PushButton $w={59} type="button">Cancel</PushButton>
              </FormActions>
            </SetupForm>
          </SidePanel>
          <Stage>
            <CanvasRow>
              <Canvas />
              <ScrollColumn $w={12}><Chevron dir="up" /><Chevron dir="down" /></ScrollColumn>
            </CanvasRow>
            <HScroll><Chevron dir="right" /></HScroll>
            <Band />
            <ScriptStrip />
            <ResultArea>
              <ResultBox>
                <ResultTop>
                  <ResultTable>
                    <thead><tr>{Array.from({ length: 12 }, (_, c) => <th key={c} />)}</tr></thead>
                    <tbody>
                      {Array.from({ length: 5 }, (_, r) => (
                        <tr key={r}>{Array.from({ length: 12 }, (_, c) => <td key={c} />)}</tr>
                      ))}
                    </tbody>
                  </ResultTable>
                  <ScrollColumn><Chevron dir="up" /><Chevron dir="down" /></ScrollColumn>
                </ResultTop>
                <ResultScroll><Chevron dir="left" /></ResultScroll>
              </ResultBox>
              <ToolsColumn>
                <Tool aria-label="Export results">
                  <svg width="18" height="17" viewBox="0 0 18 17"><path d="M1.500 1.500h3v14h-3z" fill="#f0d880" stroke="#000" /><path d="M7 2h5v4m-2-2 2 2 2-2" fill="none" stroke="#222" /><rect x="7.500" y="7.500" width="10" height="8" fill="#fff" stroke="#111" /><path d="M8 8h9v2H8z" fill="#1818a0" /><path d="M8 12.500h9M11 10v5M14 10v5" stroke="#888" /></svg>
                </Tool>
              </ToolsColumn>
            </ResultArea>
          </Stage>
        </Work>
      </MainWindow>

      <Taskbar>
        <TaskButton $w={48} $dark aria-label="Start">
          <svg width="16" height="16" viewBox="0 0 16 16" fill="#fff"><path d="M0 2.300 6.500 1.400v6.200H0zM7.300 1.300 16 0v7.600H7.300zM0 8.400h6.500v6.200L0 13.700zM7.300 8.400H16V16l-8.700-1.300z" /></svg>
        </TaskButton>
        <Search>
          <svg width="22" height="22"><circle cx="11" cy="11" r="9" fill="none" stroke="#fff" strokeWidth="2.600" /></svg>
          <input placeholder="有问题尽管问我" aria-label="有问题尽管问我" />
          <svg width="16" height="18" viewBox="0 0 16 18" fill="none" stroke="#999"><path d="M5.500 3q0-2.500 2.500-2.500T10.500 3v6q0 2.500-2.500 2.500T5.500 9zM3 8v3q0 3 5 3t5-3V8M8 14v3M5 17h6" /></svg>
        </Search>
        {taskApps.map(a => <TaskButton key={a.name} $w={a.w} $on={a.on} aria-label={a.name}>{a.art}</TaskButton>)}
        <Tray>
          <Sogou size={17} />
          <svg width="32" height="12" viewBox="0 0 32 12" fill="none" stroke="#fff" strokeWidth="1.300"><path d="M19 9l6-6 6 6" /></svg>
          <svg width="18" height="18" viewBox="0 0 18 18"><circle cx="9" cy="9" r="8.500" fill="#f0dc30" /><path d="M9 .5a8.500 8.500 0 0 0 0 17q-6-8 0-17z" fill="#48b030" /><circle cx="8.500" cy="8.500" r="5.500" fill="#2f9a2c" /><path d="M8.500 5.500v6M5.500 8.500h6" stroke="#fff" strokeWidth="2" /></svg>
          <svg width="14" height="14" viewBox="0 0 14 14" fill="none" stroke="#eee"><path d="M1 12Q2 3 12 1M4 13q1-6.500 8-8M7 13q1-4 5-5M10 13q0-2 2-2" /></svg>
          <svg width="17" height="14" viewBox="0 0 17 14" fill="none" stroke="#eee"><path d="M.5 4.500h3l3-3v11l-3-3h-3zM9 5q1.500 2 0 4M11.500 3q3 4 0 8M14 1q4 6 0 12" /></svg>
          <svg width="17" height="12" viewBox="0 0 17 12" fill="none" stroke="#eee"><path d="M5 3.500h10v7H4V7M15.500 5.500v3M1 1v3q2 2 4 0V1M3 5v4" /><path d="M0 2.500h6" /></svg>
          <Notice aria-label="Notifications">
            <svg width="18" height="18" viewBox="0 0 18 18"><path d="M1 2h16v11H9l-4 4v-4H1z" fill="#fff" /><path d="M4 5.500h10M4 8h10M4 10.500h7" stroke="#222" /></svg>
            <NoticeCount>2</NoticeCount>
          </Notice>
        </Tray>
      </Taskbar>

      <TrainingDialog />
      <Pointer width="14" height="22" viewBox="0 0 14 22"><path d="M1.500 1.500v16l4-4 3 6.500 2.500-1-3-6.500h5z" fill="#fff" stroke="#000" strokeWidth="1.200" /></Pointer>
      <Bubble>57</Bubble>
      <InputBar>
        <Sogou size={28} />
        <InputItems>
          <span>中</span>
          <svg width="14" height="14" viewBox="0 0 14 14"><path d="M9 1q5 2 4 7-3 7-12 3 8 0 8-10z" fill="#2474b8" /></svg>
          <svg width="12" height="12" viewBox="0 0 12 12"><circle cx="3" cy="3.500" r="1.700" fill="none" stroke="#2474b8" /><path d="M8 6h3v3l-2 3H8l1-3H8z" fill="#2474b8" /></svg>
          <svg width="16" height="12" viewBox="0 0 16 12"><rect x=".7" y=".7" width="14.600" height="10.600" rx="1" fill="#fff" stroke="#2474b8" strokeWidth="1.400" /><path d="M3 3.500h10M3 6h10" stroke="#2474b8" strokeWidth="1.500" strokeDasharray="1.500 1" /><path d="M4 8.700h8" stroke="#2474b8" /></svg>
          <svg width="17" height="16" viewBox="0 0 17 16" fill="#2474b8"><circle cx="6" cy="3.500" r="3" /><path d="M0 12q0-5 6-5t6 2v5H0z" /><path d="M5.500 8.500h11v6h-11z" fill="#fff" stroke="#2474b8" /><path d="M7.500 10v3h3v-3M12 10h3v3h-3m0-1.500h3" fill="none" stroke="#2474b8" /></svg>
          <svg width="15" height="14" viewBox="0 0 15 14"><path d="M4 0q3.500 3 7 0l4 3-2 3.500-2-1V14H4V5.500l-2 1L0 3z" fill="#2474b8" /></svg>
          <svg width="15" height="15" viewBox="0 0 15 15"><path d="M1 12 7 6q-1-4 4-6l-1 4 2 1 3-1q-1 5-6 5l-6 6-2-1z" fill="#2474b8" /></svg>
        </InputItems>
      </InputBar>
    </Desktop>
  );
}
